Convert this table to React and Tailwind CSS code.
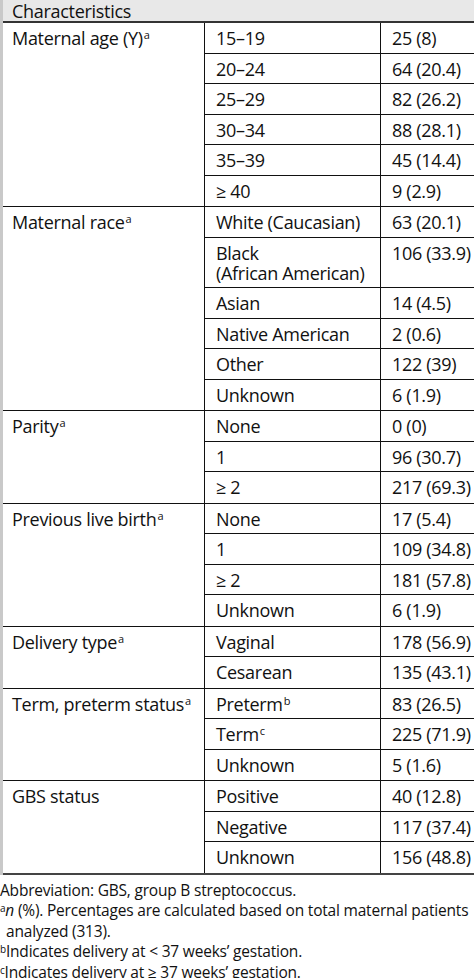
import React from "react";

const Sup = ({ children }) => (
  <span className="relative -top-[6px] text-[11px] leading-none ml-[1px]">{children}</span>
);

const FootSup = ({ children }) => (
  <span className="relative -top-[4px] text-[10px] leading-none">{children}</span>
);

const groups = [
  {
    label: "Maternal age (Y)",
    sup: "a",
    rows: [
      ["15–19", "25 (8)"],
      ["20–24", "64 (20.4)"],
      ["25–29", "82 (26.2)"],
      ["30–34", "88 (28.1)"],
      ["35–39", "45 (14.4)"],
      ["≥ 40", "9 (2.9)"],
    ],
  },
  {
    label: "Maternal race",
    sup: "a",
    rows: [
      ["White (Caucasian)", "63 (20.1)"],
      [<>Black<br />(African American)</>, "106 (33.9)", true],
      ["Asian", "14 (4.5)"],
      ["Native American", "2 (0.6)"],
      ["Other", "122 (39)"],
      ["Unknown", "6 (1.9)"],
    ],
  },
  {
    label: "Parity",
    sup: "a",
    rows: [
      ["None", "0 (0)"],
      ["1", "96 (30.7)"],
      ["≥ 2", "217 (69.3)"],
    ],
  },
  {
    label: "Previous live birth",
    sup: "a",
    rows: [
      ["None", "17 (5.4)"],
      ["1", "109 (34.8)"],
      ["≥ 2", "181 (57.8)"],
      ["Unknown", "6 (1.9)"],
    ],
  },
  {
    label: "Delivery type",
    sup: "a",
    rows: [
      ["Vaginal", "178 (56.9)"],
      ["Cesarean", "135 (43.1)"],
    ],
  },
  {
    label: "Term, preterm status",
    sup: "a",
    rows: [
      [<>Preterm<Sup>b</Sup></>, "83 (26.5)"],
      [<>Term<Sup>c</Sup></>, "225 (71.9)"],
      ["Unknown", "5 (1.6)"],
    ],
  },
  {
    label: "GBS status",
    rows: [
      ["Positive", "40 (12.8)"],
      ["Negative", "117 (37.4)"],
      ["Unknown", "156 (48.8)"],
    ],
  },
];

export default function App() {
  return (
    <div
      className="w-[474px] h-[978px] overflow-hidden bg-white text-[#111] text-[18px] leading-[20px] tracking-[-0.3px]"
      style={{ fontFamily: '"Open Sans", "Noto Sans", sans-serif' }}
    >
      <div className="w-[520px] border-l-[3px] border-[#c9c9c9]">
        <div className="h-[23px] bg-[#e8e8e8] border-b-2 border-[#333] pl-[9px] flex items-center">
          Characteristics
        </div>
        {groups.map((g, gi) => (
          <div
            key={gi}
            className={`flex ${gi === groups.length - 1 ? "border-b-2 border-[#444]" : "border-b-[1.5px] border-[#111]"}`}
          >
            <div className="w-[201px] pl-[9px] pt-[5px] whitespace-nowrap">
              {g.label}
              {g.sup && <Sup>{g.sup}</Sup>}
            </div>
            <div className="flex-1 border-l-[1.5px] border-[#111]">
              {g.rows.map((r, ri) => (
                <div
                  key={ri}
                  className={`flex ${r[2] ? "h-[50.5px]" : "h-[30.5px]"} ${ri < g.rows.length - 1 ? "border-b-[1.5px] border-[#111]" : ""}`}
                >
                  <div className="w-[175px] pl-[11px] pt-[5px] whitespace-nowrap">{r[0]}</div>
                  <div className="flex-1 border-l-[1.5px] border-[#111] pl-[11px] pt-[5px] whitespace-nowrap">
                    {r[1]}
                  </div>
                </div>
              ))}
            </div>
          </div>
        ))}
      </div>
      <div className="pt-[5px] text-[15.5px] leading-[20.5px] tracking-[-0.2px]">
        <p>Abbreviation: GBS, group B streptococcus.</p>
        <p className="pl-[6px] -indent-[6px]">
          <FootSup>a</FootSup>
          <i>n</i> (%). Percentages are calculated based on total maternal patients analyzed (313).
        </p>
        <p>
          <FootSup>b</FootSup>Indicates delivery at &lt; 37 weeks’ gestation.
        </p>
        <p>
          <FootSup>c</FootSup>Indicates delivery at ≥ 37 weeks’ gestation.
        </p>
      </div>
    </div>
  );
}
